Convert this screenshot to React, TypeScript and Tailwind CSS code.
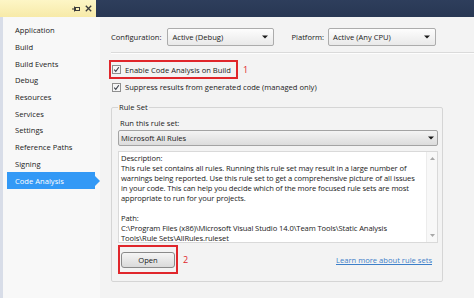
import React from "react";

function Caret() {
  return (
    <svg width="6" height="4" viewBox="0 0 6 4" className="shrink-0">
      <path d="M0 0.5 L6 0.5 L3 3.5 Z" fill="#1a1a1a" />
    </svg>
  );
}

function Check() {
  return (
    <svg width="9" height="9" viewBox="0 0 9 9" className="shrink-0">
      <rect x="0.5" y="0.5" width="8" height="8" fill="#f6f6f6" stroke="#8f8f8f" />
      <path d="M2.2 4.6 L3.8 6.4 L6.8 2.2" fill="none" stroke="#3a3f4a" strokeWidth="1.1" />
    </svg>
  );
}

const navItems = [
  "Application",
  "Build",
  "Build Events",
  "Debug",
  "Resources",
  "Services",
  "Settings",
  "Reference Paths",
  "Signing",
];

const descLines = [
  "Description:",
  "This rule set contains all rules. Running this rule set may result in a large number of",
  "warnings being reported. Use this rule set to get a comprehensive picture of all issues",
  "in your code. This can help you decide which of the more focused rule sets are most",
  "appropriate to run for your projects.",
  "\u00a0",
  "Path:",
  "C:\\Program Files (x86)\\Microsoft Visual Studio 14.0\\Team Tools\\Static Analysis",
  "Tools\\Rule Sets\\AllRules.ruleset",
];

export default function App() {
  return (
    <div className="w-[474px] h-[298px] overflow-hidden flex flex-col bg-[#f3f3f3] font-['Open_Sans',sans-serif] text-[7.6px] leading-[10px] text-[#1a1a1a]">
      {/* top bar */}
      <div className="flex h-[17px] shrink-0">
        <div className="w-[96px] bg-linear-to-b from-[#fdf6c6] to-[#f7eaa8] flex items-center justify-end pr-[4px] gap-[5px]">
          <svg width="8" height="6" viewBox="0 0 8 6">
            <path d="M0 3 H2.5" stroke="#3b3b3b" strokeWidth="1" />
            <path d="M2.5 0.5 V5.5" stroke="#3b3b3b" strokeWidth="1" />
            <rect x="3.5" y="1.5" width="4" height="3" fill="none" stroke="#3b3b3b" strokeWidth="1" />
          </svg>
          <svg width="7" height="7" viewBox="0 0 7 7">
            <path d="M0.8 0.8 L6.2 6.2 M6.2 0.8 L0.8 6.2" stroke="#3b3b3b" strokeWidth="1.3" />
          </svg>
        </div>
        <div className="flex-1 bg-linear-to-b from-[#2e3e5c] to-[#283753]" />
      </div>

      {/* body */}
      <div className="flex flex-1 min-h-0">
        <div className="w-[3px] bg-[#d8dde8]" />
        <div className="w-[97px] bg-[#f8f8f8] pt-[5px] flex flex-col">
          {navItems.map((t) => (
            <div key={t} className="h-[16.7px] ml-[4px] w-[88px] pl-[8px] flex items-center whitespace-nowrap">
              {t}
            </div>
          ))}
          <div className="relative h-[16.7px] ml-[4px] w-[88px] pl-[8px] flex items-center whitespace-nowrap bg-[#3399f6] text-white">
            Code Analysis
            <span className="absolute left-full top-1/2 -translate-y-1/2 w-0 h-0 border-y-[5px] border-y-transparent border-l-[5px] border-l-[#3399f6]" />
          </div>
        </div>

        {/* content */}
        <div className="flex-1 pl-[11px] pt-[11px] flex flex-col">
          <div className="flex items-center h-[18px]">
            <span className="whitespace-nowrap">Configuration:</span>
            <div className="ml-[6px] w-[107px] h-[18px] border border-[#acacac] rounded-[2px] bg-linear-to-b from-[#fdfdfd] to-[#e9e9e9] flex items-center pl-[4px] pr-[5px] justify-between">
              <span>Active (Debug)</span>
              <Caret />
            </div>
            <span className="ml-[17px] whitespace-nowrap">Platform:</span>
            <div className="ml-[4px] w-[108px] h-[18px] border border-[#acacac] rounded-[2px] bg-linear-to-b from-[#fdfdfd] to-[#e9e9e9] flex items-center pl-[4px] pr-[5px] justify-between">
              <span>Active (Any CPU)</span>
              <Caret />
            </div>
          </div>

          <div className="mt-[6px] h-[2px] border-t border-[#dadada] border-b border-b-[#fdfdfd]" />

          <div className="mt-[6px] flex items-center">
            <div className="-ml-[2px] h-[19px] border-2 border-[#e0262b] flex items-center pl-[1px] pr-[5px] gap-[4px]">
              <Check />
              <span className="whitespace-nowrap">Enable Code Analysis on Build</span>
            </div>
            <span className="ml-[5px] text-[9px] text-[#e0262b]">1</span>
          </div>

          <div className="mt-[3px] h-[10px] flex items-center pl-[1px] gap-[4px]">
            <Check />
            <span className="whitespace-nowrap">Suppress results from generated code (managed only)</span>
          </div>

          <fieldset className="mt-[10px] w-[332px] border border-[#d5d5d5] rounded-[2px] pl-[6px] pr-[4px] pb-[7px]">
            <legend className="px-[1px]">Rule Set</legend>
            <div className="mt-[6px] h-[10px] pl-[2px]">Run this rule set:</div>
            <div className="mt-[2px] h-[16px] border border-[#a3a3a3] rounded-[2px] bg-linear-to-b from-[#f4f4f4] to-[#dcdcdc] flex items-center pl-[2px] pr-[3px] justify-between">
              <span>Microsoft All Rules</span>
              <Caret />
            </div>
            <div className="mt-[5px] h-[92px] bg-white border border-[#d9d9d9] flex">
              <div className="flex-1 pl-[2px] pt-[1px] flex flex-col tracking-[-0.1px]">
                {descLines.map((l, i) => (
                  <div key={i} className="h-[10px] whitespace-nowrap">{l}</div>
                ))}
              </div>
              <div className="w-[11px] bg-[#f8f8f8] border-l border-[#ececec] flex flex-col items-center justify-between py-[5px]">
                <svg width="5" height="3" viewBox="0 0 5 3"><path d="M0 3 L5 3 L2.5 0 Z" fill="#a8a8a8" /></svg>
                <svg width="5" height="3" viewBox="0 0 5 3"><path d="M0 0 L5 0 L2.5 3 Z" fill="#a8a8a8" /></svg>
              </div>
            </div>
            <div className="mt-[2px] flex items-center">
              <div className="w-[60px] h-[29px] border-2 border-[#e0262b] flex items-center justify-center">
                <div className="w-[54px] h-[16px] border border-[#8a8a8a] rounded-[3px] bg-linear-to-b from-[#f5f5f5] to-[#dadada] flex items-center justify-center">
                  Open
                </div>
              </div>
              <span className="ml-[5px] text-[9px] text-[#e0262b]">2</span>
              <span className="ml-auto mr-[6px] text-[#3d7fc9] underline">Learn more about rule sets</span>
            </div>
          </fieldset>
        </div>
      </div>
    </div>
  );
}
